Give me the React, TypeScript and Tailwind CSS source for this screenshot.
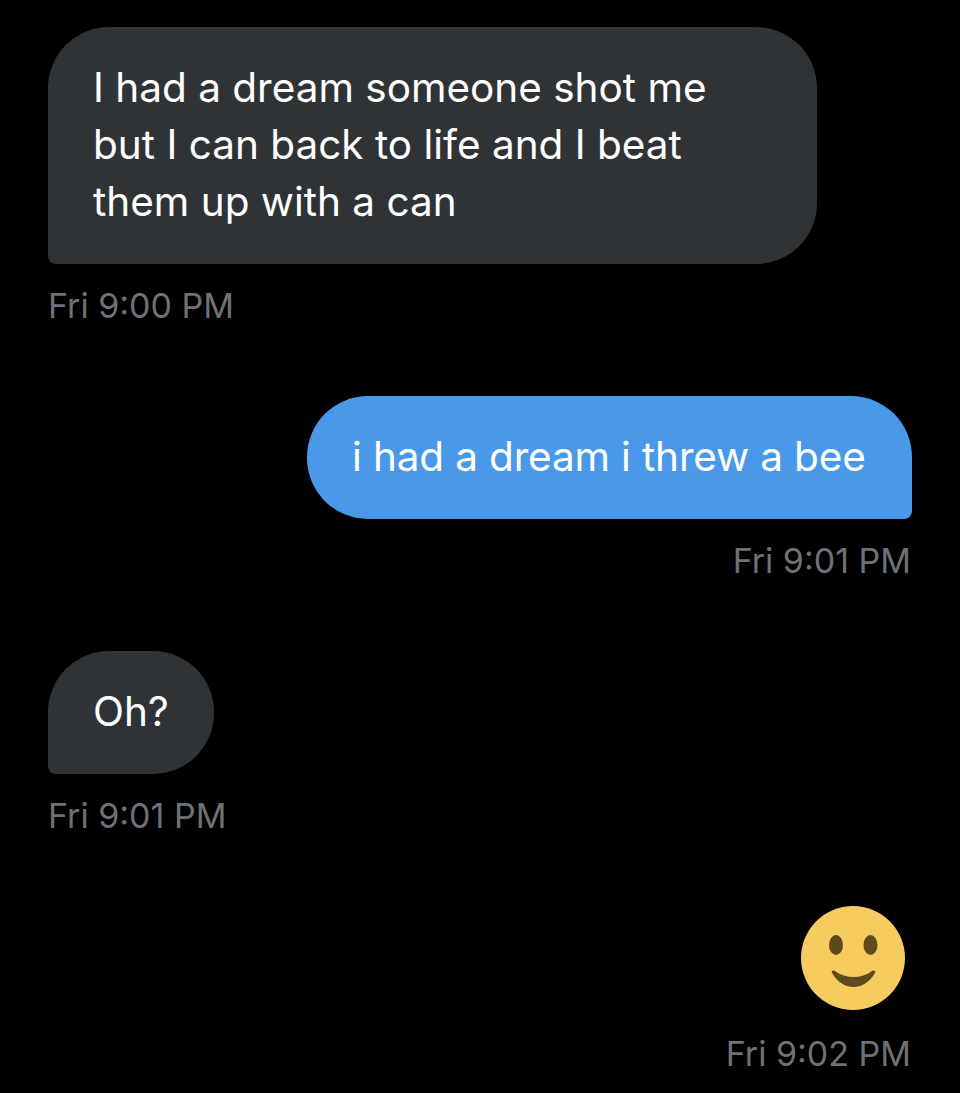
const sans = "font-['Inter','Liberation_Sans',sans-serif]";

function Smiley() {
  return (
    <svg width="104" height="104" viewBox="0 0 104 104" aria-label="smiley">
      <circle cx="52" cy="52" r="52" fill="#F6CB60" />
      <ellipse cx="35" cy="39" rx="7" ry="10" fill="#5F4A1C" />
      <ellipse cx="69.500" cy="39" rx="7" ry="10" fill="#5F4A1C" />
      <path d="M31 67 C30 65 32 64 34 65 C45 73 60 73 71 65 C73 64 75 65 74 67 C68 77 60 81 52.500 81 C45 81 37 77 31 67 Z" fill="#5F4A1C" />
    </svg>
  );
}

export default function App() {
  return (
    <div className={`${sans} w-[960px] h-[1093px] bg-black overflow-hidden flex flex-col pt-[27px] px-12 text-[40.500px] leading-[57px] text-white`}>
      <div className="w-[769px] h-[237px] bg-[#303336] rounded-[61px] rounded-bl-[8px] pl-[45px] pt-[32px]">
        <p>I had a dream someone shot me</p>
        <p>but I can back to life and I beat</p>
        <p>them up with a can</p>
      </div>
      <div className="mt-[20px] text-[34px] leading-[44px] text-[#6e7276]">Fri 9:00 PM</div>

      <div className="mt-[68px] self-end w-[605px] h-[123px] bg-[#4a99e9] rounded-[61px] rounded-br-[8px] pl-[45px] pt-[32px] tracking-[-0.15px]">
        i had a dream i threw a bee
      </div>
      <div className="mt-[20px] self-end pr-[1px] text-[34px] leading-[44px] text-[#6e7276]">Fri 9:01 PM</div>

      <div className="mt-[68px] w-[166px] h-[123px] bg-[#303336] rounded-[61px] rounded-bl-[8px] pl-[45px] pt-[32px]">
        Oh?
      </div>
      <div className="mt-[20px] text-[34px] leading-[44px] text-[#6e7276]">Fri 9:01 PM</div>

      <div className="mt-[68px] self-end pr-[7px] flex">
        <Smiley />
      </div>
      <div className="mt-[22px] self-end pr-[1px] text-[34px] leading-[44px] text-[#6e7276]">Fri 9:02 PM</div>
    </div>
  );
}
